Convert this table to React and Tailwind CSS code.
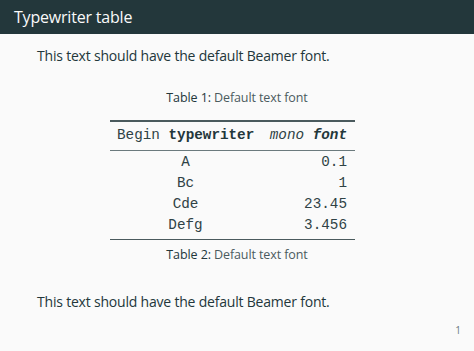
const rows = [
  ['A', '0.1'],
  ['Bc', '1'],
  ['Cde', '23.45'],
  ['Defg', '3.456'],
]

export default function App() {
  return (
    <div className="w-[474px] h-[351px] bg-[#fafafa] text-[#23373b] flex flex-col font-['Open_Sans',sans-serif]">
      <div className="h-[34px] shrink-0 bg-[#23373b] text-[#fafafa] flex items-center px-[14px] text-[16px] tracking-[-0.2px]">
        Typewriter table
      </div>

      <p className="mt-[12px] ml-[37px] h-[20px] leading-[20px] text-[14px] tracking-[-0.2px]">
        This text should have the default Beamer font.
      </p>

      <p className="mt-[24px] h-[16px] leading-[16px] text-[12.5px] text-center tracking-[-0.1px]">
        <span className="text-[#23373b]">Table 1:</span>{' '}
        <span className="text-[#4b5b5e]">Default text font</span>
      </p>

      <div className="mt-[14px] ml-[110px] w-[245px] font-['Liberation_Mono',monospace] text-[14.3px] text-[#2f4245]">
        <div className="h-[1.5px] bg-[#4a5a5d]" />
        <div className="flex h-[28px] items-center">
          <div className="w-[151px] pl-[7px] pr-[7px] text-center whitespace-nowrap">
            Begin <span className="font-bold text-[#23373b]">typewriter</span>
          </div>
          <div className="flex-1 pr-[8px] text-right whitespace-nowrap">
            <span className="italic">mono</span> <span className="italic font-bold text-[#23373b]">font</span>
          </div>
        </div>
        <div className="h-px bg-[#6b7a7d]" />
        <div className="pt-[2px] pb-[2px]">
          {rows.map(([a, b]) => (
            <div key={a} className="flex h-[21px] items-center">
              <div className="w-[151px] text-center">{a}</div>
              <div className="flex-1 pr-[8px] text-right">{b}</div>
            </div>
          ))}
        </div>
        <div className="h-[1.5px] bg-[#4a5a5d]" />
      </div>

      <p className="mt-[7px] h-[16px] leading-[16px] text-[12.5px] text-center tracking-[-0.1px]">
        <span className="text-[#23373b]">Table 2:</span>{' '}
        <span className="text-[#4b5b5e]">Default text font</span>
      </p>

      <p className="mt-[29px] ml-[37px] h-[20px] leading-[20px] text-[14px] tracking-[-0.2px]">
        This text should have the default Beamer font.
      </p>

      <div className="mt-[11px] mr-[13px] text-right text-[10px] text-[#6b7a7d]">1</div>
    </div>
  )
}
